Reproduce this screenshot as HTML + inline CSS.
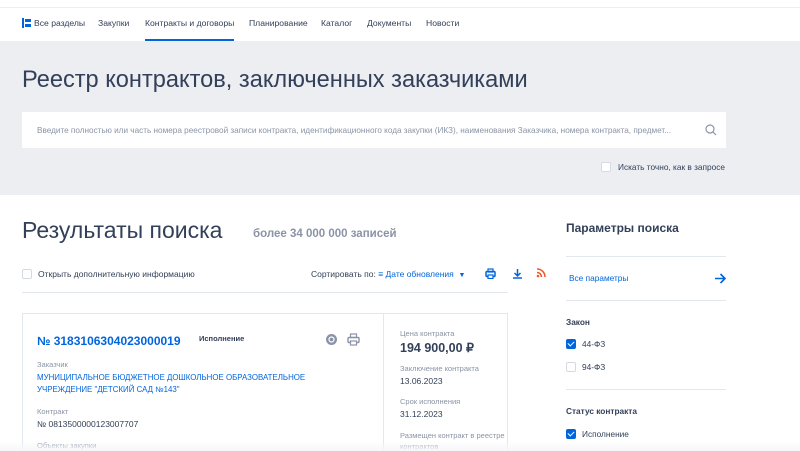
<!DOCTYPE html>
<html><head><meta charset="utf-8"><style>
*{box-sizing:border-box;margin:0;padding:0}
html,body{width:800px;height:451px;overflow:hidden}
body{background:#fff;font-family:"Liberation Sans",sans-serif;color:#334059;position:relative}
.a{position:absolute;white-space:nowrap}
.blue{color:#0065dd}
.lbl{font-size:7.5px;color:#8a94a6}
.v{font-size:8.5px;color:#334059}
.cb{position:absolute;width:10px;height:10px;border:1px solid #d5dae2;border-radius:2px;background:#fff}
.cbc{position:absolute;width:10px;height:10px;border-radius:2px;background:#0065dd}
.cbc:after{content:"";position:absolute;left:3px;top:1px;width:3px;height:5px;border:solid #fff;border-width:0 1.5px 1.5px 0;transform:rotate(45deg)}
.nav{top:18px;font-size:8.6px}
</style></head><body>
<div class="a" style="left:0;top:7px;width:800px;height:1px;background:#eceef3"></div>
<div class="a" style="left:0;top:41px;width:800px;height:154px;background:#eceef2"></div>
<svg class="a" style="left:22px;top:18px" width="9" height="10"><rect x="0" y="0" width="2" height="10" fill="#0065dd"/><rect x="3" y="1" width="6" height="3" fill="#0065dd"/><rect x="3" y="6" width="6" height="3" fill="#0065dd"/></svg>
<div class="a nav" style="left:34px">Все разделы</div>
<div class="a nav" style="left:98px">Закупки</div>
<div class="a nav" style="left:145px">Контракты и договоры</div>
<div class="a" style="left:145px;top:39px;width:89px;height:2px;background:#0065dd"></div>
<div class="a nav" style="left:249px">Планирование</div>
<div class="a nav" style="left:321px">Каталог</div>
<div class="a nav" style="left:367px">Документы</div>
<div class="a nav" style="left:426px">Новости</div>
<div class="a" style="top:67px;left:22px;font-size:23.6px;color:#334059">Реестр контрактов, заключенных заказчиками</div>
<div class="a" style="left:22px;top:112px;width:704px;height:36px;background:#fff"></div>
<div class="a" style="top:126px;left:37px;font-size:8.2px;color:#8a94a6">Введите полностью или часть номера реестровой записи контракта, идентификационного кода закупки (ИКЗ), наименования Заказчика, номера контракта, предмет...</div>
<svg class="a" style="left:705px;top:124px" width="12" height="12"><circle cx="5" cy="5" r="4" fill="none" stroke="#8a94a6" stroke-width="1.2"/><path d="M8 8l3 3" stroke="#8a94a6" stroke-width="1.2"/></svg>
<div class="cb" style="left:601px;top:162px"></div>
<div class="a" style="top:162px;left:618px;font-size:8.3px">Искать точно, как в запросе</div>
<div class="a" style="top:217px;left:22px;font-size:23px;color:#334059">Результаты поиска</div>
<div class="a" style="top:228px;left:253px;font-size:11.5px;color:#8a94a6;font-weight:bold">более 34 000 000 записей</div>
<div class="cb" style="left:22px;top:269px"></div>
<div class="a" style="top:269px;left:38px;font-size:8.5px">Открыть дополнительную информацию</div>
<div class="a" style="top:269px;left:311px;font-size:8.5px">Сортировать по: <span class="blue">&#8801; Дате обновления &nbsp;<span style="font-size:7px">&#9660;</span></span></div>
<svg class="a" style="left:485px;top:268px" width="11" height="11"><rect x="1" y="3.5" width="9" height="5" rx="1" fill="none" stroke="#0065dd" stroke-width="1.5"/><rect x="3" y="1" width="5" height="3" fill="none" stroke="#0065dd" stroke-width="1.2"/><rect x="3" y="7" width="5" height="3.5" fill="#fff" stroke="#0065dd" stroke-width="1.2"/></svg>
<svg class="a" style="left:512px;top:268px" width="11" height="11"><path d="M5.5 1v7M2.5 5l3 3 3-3M1 10h9" fill="none" stroke="#0065dd" stroke-width="1.5"/></svg>
<svg class="a" style="left:536px;top:268px" width="10" height="10"><circle cx="2" cy="8" r="1.3" fill="#f0582a"/><path d="M1 4.5a4.5 4.5 0 0 1 4.5 4.5M1 1a8 8 0 0 1 8 8" fill="none" stroke="#f0582a" stroke-width="1.6"/></svg>
<div class="a" style="left:22px;top:292px;width:486px;height:1px;background:#e3e7ee"></div>
<div class="a" style="left:22px;top:313px;width:486px;height:150px;border:1px solid #e3e7ee"></div>
<div class="a" style="left:383px;top:313px;width:1px;height:150px;background:#e3e7ee"></div>
<div class="a blue" style="top:334px;left:37px;font-size:12px;font-weight:bold">№ 3183106304023000019</div>
<div class="a" style="top:334px;left:199px;font-size:7.5px;font-weight:bold">Исполнение</div>
<svg class="a" style="left:325px;top:333px" width="13" height="13"><circle cx="6.5" cy="6.5" r="5.5" fill="#8a94a6"/><circle cx="6.5" cy="6.5" r="2.5" fill="none" stroke="#fff" stroke-width="1.2"/></svg>
<svg class="a" style="left:347px;top:333px" width="13" height="13"><rect x="1" y="4.5" width="11" height="5" rx="1" fill="none" stroke="#8a94a6" stroke-width="1.4"/><rect x="3.5" y="1" width="6" height="3.5" fill="none" stroke="#8a94a6" stroke-width="1.2"/><rect x="3.5" y="8" width="6" height="4" fill="#fff" stroke="#8a94a6" stroke-width="1.2"/></svg>
<div class="a lbl" style="top:360px;left:37px">Заказчик</div>
<div class="a blue" style="top:372px;left:37px;font-size:7.9px;line-height:12px">МУНИЦИПАЛЬНОЕ БЮДЖЕТНОЕ ДОШКОЛЬНОЕ ОБРАЗОВАТЕЛЬНОЕ<br>УЧРЕЖДЕНИЕ "ДЕТСКИЙ САД №143"</div>
<div class="a lbl" style="top:407px;left:37px">Контракт</div>
<div class="a v" style="top:419px;left:37px">№ 0813500000123007707</div>
<div class="a lbl" style="top:441px;left:37px">Объекты закупки</div>
<div class="a lbl" style="top:329px;left:400px">Цена контракта</div>
<div class="a" style="top:340px;left:400px;font-size:12.5px;font-weight:bold;color:#334059">194 900,00 ₽</div>
<div class="a lbl" style="top:364px;left:400px">Заключение контракта</div>
<div class="a v" style="top:376px;left:400px">13.06.2023</div>
<div class="a lbl" style="top:397px;left:400px">Срок исполнения</div>
<div class="a v" style="top:409px;left:400px">31.12.2023</div>
<div class="a lbl" style="top:430px;left:400px;line-height:11px">Размещен контракт в реестре<br>контрактов</div>
<div class="a" style="top:221px;left:566px;font-size:12px;font-weight:bold;color:#334059">Параметры поиска</div>
<div class="a" style="left:566px;top:256px;width:160px;height:1px;background:#e3e7ee"></div>
<div class="a blue" style="top:273px;left:569px;font-size:8.3px">Все параметры</div>
<svg class="a" style="left:714px;top:273px" width="12" height="11"><path d="M1 5.5h10M6.5 1l4.5 4.5-4.5 4.5" fill="none" stroke="#0065dd" stroke-width="1.6"/></svg>
<div class="a" style="left:566px;top:300px;width:160px;height:1px;background:#e3e7ee"></div>
<div class="a" style="top:317px;left:566px;font-size:8.3px;font-weight:bold">Закон</div>
<div class="cbc" style="left:566px;top:339px"></div>
<div class="a" style="top:339px;left:582px;font-size:8.3px">44-ФЗ</div>
<div class="cb" style="left:566px;top:362px"></div>
<div class="a" style="top:362px;left:582px;font-size:8.3px">94-ФЗ</div>
<div class="a" style="left:566px;top:389px;width:160px;height:1px;background:#e3e7ee"></div>
<div class="a" style="top:406px;left:566px;font-size:8.3px;font-weight:bold">Статус контракта</div>
<div class="cbc" style="left:566px;top:429px"></div>
<div class="a" style="top:429px;left:582px;font-size:8.3px">Исполнение</div>
<div class="a" style="left:0;top:441px;width:800px;height:10px;background:linear-gradient(rgba(255,255,255,0),rgba(246,247,249,1))"></div>
</body></html>
